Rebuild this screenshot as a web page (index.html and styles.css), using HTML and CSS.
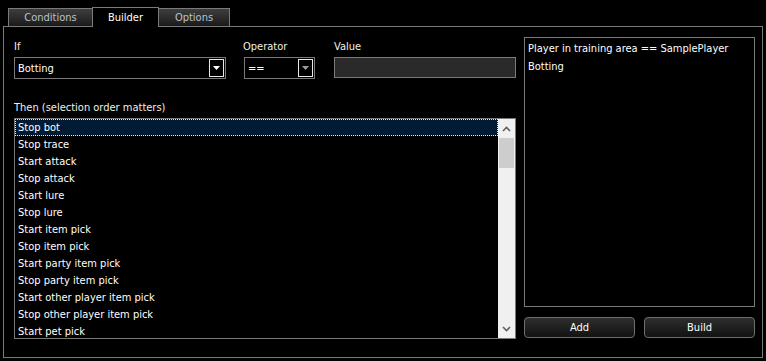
FILE: index.html
```html
<!DOCTYPE html>
<html>
<head>
<meta charset="utf-8">
<link rel="stylesheet" href="styles.css">
</head>
<body>
<div class="tabs">
  <div class="tab tab-cond">Conditions</div>
  <div class="tab tab-build active">Builder</div>
  <div class="tab tab-opt">Options</div>
</div>
<div class="panel">
  <div class="left">
    <div class="fields">
      <div class="field f-if">
        <div class="label">If</div>
        <div class="combo">
          <span class="combo-text">Botting</span>
          <span class="drop"><svg width="7" height="4" viewBox="0 0 7 4"><path d="M0 0H7L3.5 4Z" fill="#fff"/></svg></span>
        </div>
      </div>
      <div class="field f-op">
        <div class="label">Operator</div>
        <div class="combo">
          <span class="combo-text">==</span>
          <span class="drop"><svg width="7" height="4" viewBox="0 0 7 4"><path d="M0 0H7L3.5 4Z" fill="#9a9a9a"/></svg></span>
        </div>
      </div>
      <div class="field f-val">
        <div class="label">Value</div>
        <div class="input"></div>
      </div>
    </div>
    <div class="then-label">Then (selection order matters)</div>
    <div class="list">
      <div class="items">
        <div class="item selected">Stop bot</div>
        <div class="item">Stop trace</div>
        <div class="item">Start attack</div>
        <div class="item">Stop attack</div>
        <div class="item">Start lure</div>
        <div class="item">Stop lure</div>
        <div class="item">Start item pick</div>
        <div class="item">Stop item pick</div>
        <div class="item">Start party item pick</div>
        <div class="item">Stop party item pick</div>
        <div class="item">Start other player item pick</div>
        <div class="item">Stop other player item pick</div>
        <div class="item">Start pet pick</div>
      </div>
      <div class="scrollbar">
        <div class="arrow"><svg width="9" height="6" viewBox="0 0 9 6"><path d="M1 5L4.5 1.5L8 5" fill="none" stroke="#606060" stroke-width="1.6"/></svg></div>
        <div class="thumb"></div>
        <div class="track"></div>
        <div class="arrow"><svg width="9" height="6" viewBox="0 0 9 6"><path d="M1 1L4.5 4.5L8 1" fill="none" stroke="#606060" stroke-width="1.6"/></svg></div>
      </div>
    </div>
  </div>
  <div class="right">
    <div class="output">
      <div>Player in training area == SamplePlayer</div>
      <div>Botting</div>
    </div>
    <div class="buttons">
      <div class="btn">Add</div>
      <div class="btn">Build</div>
    </div>
  </div>
</div>
</body>
</html>
```
FILE: styles.css
```css
html, body {
  margin: 0;
  padding: 0;
  background: #000;
}
body {
  width: 766px;
  height: 361px;
  overflow: hidden;
  font-family: "DejaVu Sans Condensed", "DejaVu Sans", sans-serif;
  font-stretch: condensed;
  font-size: 11px;
  color: #e6e6e6;
}
.tabs {
  display: flex;
  align-items: flex-end;
  padding-left: 8px;
  padding-top: 7px;
  height: 19px;
  position: relative;
  z-index: 1;
}
.tab {
  box-sizing: border-box;
  height: 18px;
  border: 1px solid #7a7a7a;
  border-bottom: none;
  background: linear-gradient(#3e3e3e, #1a1a1a);
  color: #b9c3cc;
  text-align: center;
  line-height: 18px;
}
.tab + .tab { margin-left: -1px; }
.tab-cond { width: 85px; }
.tab-build { width: 67px; }
.tab-opt { width: 72px; }
.tab.active {
  height: 20px;
  margin-bottom: -1px;
  background: #000;
  color: #fff;
  line-height: 19px;
  position: relative;
  z-index: 2;
}
.panel {
  box-sizing: border-box;
  margin-left: 3px;
  width: 760px;
  height: 332px;
  border: 1px solid #7a7a7a;
  padding: 10px 8px 0 10px;
  display: flex;
  gap: 8px;
}
.left {
  width: 502px;
  display: flex;
  flex-direction: column;
}
.fields {
  display: flex;
}
.field { display: flex; flex-direction: column; }
.f-if { width: 212px; }
.f-op { width: 71px; margin-left: 18px; }
.f-val { width: 182px; margin-left: 19px; }
.label {
  height: 20px;
  line-height: 20px;
  color: #f0f0e6;
}
.f-op .label { margin-left: -1px; }
.combo {
  box-sizing: border-box;
  height: 22px;
  border: 1px solid #7a7a7a;
  display: flex;
  align-items: center;
  justify-content: space-between;
  padding-left: 3px;
  padding-right: 1px;
  background: #000;
}
.combo-text { color: #fff; }
.drop {
  box-sizing: border-box;
  width: 15px;
  height: 18px;
  border: 1px solid #e8e8e8;
  display: flex;
  align-items: center;
  justify-content: center;
  background: #000;
}
.input {
  box-sizing: border-box;
  height: 21px;
  border: 1px solid #7a7a7a;
  background: #2a2a2a;
}
.then-label {
  height: 39px;
  box-sizing: border-box;
  padding-top: 20px;
  line-height: 17px;
  color: #f0f0e6;
}
.list {
  box-sizing: border-box;
  height: 221px;
  border: 1px solid #7a7a7a;
  display: flex;
}
.items {
  flex: 1;
  overflow: hidden;
}
.item {
  box-sizing: border-box;
  height: 17px;
  line-height: 17px;
  padding-left: 3px;
  color: #fff;
  white-space: nowrap;
}
.item.selected {
  background: #001b33;
  outline: 1px dotted #e8e8e8;
  outline-offset: -1px;
}
.scrollbar {
  width: 17px;
  background: #f0f0f0;
  display: flex;
  flex-direction: column;
  align-items: center;
}
.arrow {
  height: 19px;
  width: 17px;
  display: flex;
  align-items: center;
  justify-content: center;
}
.thumb {
  width: 15px;
  height: 30px;
  background: #cdcdcd;
}
.track { flex: 1; }
.right {
  width: 231px;
  display: flex;
  flex-direction: column;
}
.output {
  box-sizing: border-box;
  height: 270px;
  border: 1px solid #7a7a7a;
  padding: 2px 3px;
  line-height: 18px;
  color: #fff;
}
.buttons {
  display: flex;
  gap: 9px;
  margin-top: 10px;
}
.btn {
  box-sizing: border-box;
  width: 111px;
  height: 21px;
  border: 1px solid #6e6e6e;
  border-radius: 4px;
  background: linear-gradient(#2e2e2e, #121212);
  color: #fff;
  text-align: center;
  line-height: 19px;
}
```
